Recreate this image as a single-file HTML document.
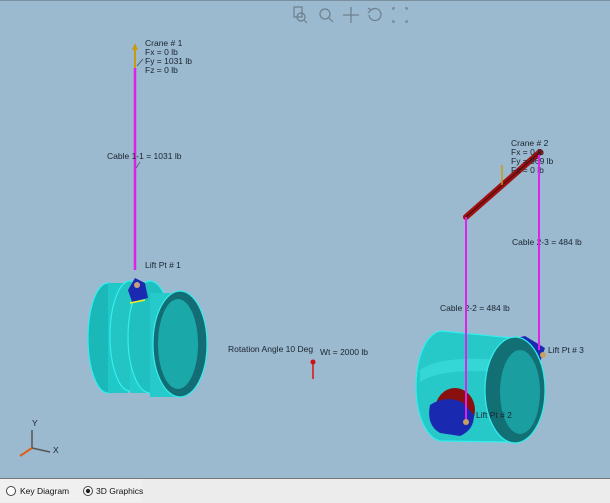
<!DOCTYPE html>
<html><head><style>
html,body{margin:0;padding:0;background:#9bb9cf;width:610px;height:503px;overflow:hidden;font-family:"Liberation Sans",sans-serif}
svg{position:absolute;left:0;top:0}
.t{font-size:8.5px;fill:#1a2430}
</style></head><body>
<svg width="610" height="503" viewBox="0 0 610 503">
<rect x="0" y="0" width="610" height="478" fill="#9bb9cf"/>
<rect x="0" y="0" width="610" height="1" fill="#7890a0"/>
<g stroke="#6d7f8c" fill="none" stroke-width="1.2">
<rect x="294" y="7" width="8" height="10"/><circle cx="301" cy="17" r="4"/><line x1="304" y1="20" x2="307" y2="23"/>
<circle cx="325" cy="14" r="5"/><line x1="329" y1="18" x2="333" y2="22"/>
<line x1="351" y1="7" x2="351" y2="23"/><line x1="343" y1="15" x2="359" y2="15"/>
<path d="M371 10 A6 6 0 1 1 369 15"/><path d="M368 8 L371 10 L368 13"/>
<path d="M395 8 l-2 0 0 2 M405 8 l2 0 0 2 M395 22 l-2 0 0-2 M405 22 l2 0 0-2"/>
</g>
<line x1="135" y1="68" x2="135" y2="270" stroke="#dd22ee" stroke-width="2.5"/>
<line x1="135" y1="50" x2="135" y2="68" stroke="#c89a10" stroke-width="2"/>
<path d="M132 50 L135 43 L138 50Z" fill="#c89a10"/>
<line x1="137" y1="66" x2="143" y2="59" stroke="#333" stroke-width=".6"/>
<text class="t" x="145" y="46">Crane # 1</text>
<text class="t" x="145" y="55">Fx = 0 lb</text>
<text class="t" x="145" y="64">Fy = 1031 lb</text>
<text class="t" x="145" y="73">Fz = 0 lb</text>
<text class="t" x="107" y="159">Cable 1-1 = 1031 lb</text>
<line x1="136" y1="168" x2="140" y2="162" stroke="#333" stroke-width=".6"/>
<text class="t" x="145" y="268">Lift Pt # 1</text>
<g stroke="#33eeee" stroke-width="1.2">
<ellipse cx="108" cy="338" rx="20" ry="55" fill="#1ab8b8"/>
<rect x="108" y="283" width="20" height="110" fill="#20c8c8" stroke="none"/>
<ellipse cx="130" cy="336" rx="20" ry="55" fill="#22c4c4"/>
<rect x="130" y="288" width="30" height="105" fill="#25cccc" stroke="none"/>
<ellipse cx="150" cy="337" rx="22" ry="56" fill="#20c0c0"/>
<rect x="150" y="293" width="30" height="104" fill="#26caca" stroke="none"/>
<ellipse cx="180" cy="344" rx="27" ry="53" fill="#126e74"/>
<ellipse cx="178" cy="344" rx="20" ry="45" fill="#1aa8a8" stroke="none"/>
</g>
<path d="M128 290 L135 278 L145 283 L148 298 L132 302Z" fill="#1a2ab0"/>
<circle cx="137" cy="285" r="3" fill="#c8a080"/>
<line x1="130" y1="303" x2="145" y2="300" stroke="#eeee22" stroke-width="1.5"/>
<text class="t" x="228" y="352">Rotation Angle 10 Deg</text>
<text class="t" x="320" y="355">Wt = 2000 lb</text>
<line x1="313" y1="362" x2="313" y2="379" stroke="#dd1111" stroke-width="1.5"/>
<circle cx="313" cy="362" r="2.5" fill="#cc1111"/>
<line x1="466" y1="217" x2="540" y2="152" stroke="#a01010" stroke-width="6" stroke-linecap="round"/>
<line x1="466" y1="217" x2="540" y2="152" stroke="#331111" stroke-width="1"/>
<line x1="502" y1="165" x2="502" y2="185" stroke="#c89a10" stroke-width="1.5"/>
<text class="t" x="511" y="146">Crane # 2</text>
<text class="t" x="511" y="155">Fx = 0 lb</text>
<text class="t" x="511" y="164">Fy = 969 lb</text>
<text class="t" x="511" y="173">Fz = 0 lb</text>
<text class="t" x="512" y="245">Cable 2-3 = 484 lb</text>
<text class="t" x="440" y="311">Cable 2-2 = 484 lb</text>
<!-- right cylinder -->
<path d="M442 331 L512 338 L508 442 L442 441 A26 55 0 0 1 442 331Z" fill="#26c8c8" stroke="#33eeee" stroke-width="1.2"/>
<path d="M420 370 Q440 355 500 360 L500 372 Q440 368 420 382Z" fill="#40e0e0" opacity=".6"/>
<path d="M508 340 L525 336 L545 348 L540 362Z" fill="#1a2ab0"/>
<ellipse cx="515" cy="390" rx="30" ry="53" fill="#127074" stroke="#33eeee" stroke-width="1.2"/>
<ellipse cx="520" cy="392" rx="20" ry="42" fill="#1a9ea0"/>
<line x1="539" y1="155" x2="539" y2="350" stroke="#dd22ee" stroke-width="2"/>
<circle cx="543" cy="355" r="3" fill="#c8a060"/>
<ellipse cx="455" cy="410" rx="20" ry="22" fill="#8a1010"/>
<path d="M430 405 Q445 395 462 402 L474 415 Q474 430 460 436 L440 433 Q426 425 430 405Z" fill="#1a2ab0"/>
<line x1="466" y1="217" x2="466" y2="420" stroke="#dd22ee" stroke-width="2"/>
<circle cx="466" cy="422" r="3" fill="#c8a060"/>
<text class="t" x="476" y="418">Lift Pt # 2</text>
<text class="t" x="548" y="353">Lift Pt # 3</text>
<line x1="32" y1="448" x2="32" y2="430" stroke="#555" stroke-width="1.5"/>
<line x1="32" y1="448" x2="50" y2="452" stroke="#555" stroke-width="1.5"/>
<line x1="32" y1="448" x2="20" y2="456" stroke="#e0601a" stroke-width="2"/>
<text class="t" x="32" y="426" font-size="7">Y</text>
<text class="t" x="53" y="453" font-size="7">X</text>
<rect x="0" y="478" width="610" height="25" fill="#ececec"/>
<line x1="0" y1="478.5" x2="610" y2="478.5" stroke="#777"/>
<rect x="0" y="479" width="142" height="23" fill="#f0f0f0"/>
<circle cx="11" cy="491" r="4.5" fill="#fff" stroke="#444"/>
<text x="20" y="494" font-size="8.5" fill="#111">Key Diagram</text>
<circle cx="88" cy="491" r="4.5" fill="#fff" stroke="#444"/>
<circle cx="88" cy="491" r="2.2" fill="#222"/>
<text x="96" y="494" font-size="8.5" fill="#111">3D Graphics</text>
</svg>
</body></html>
